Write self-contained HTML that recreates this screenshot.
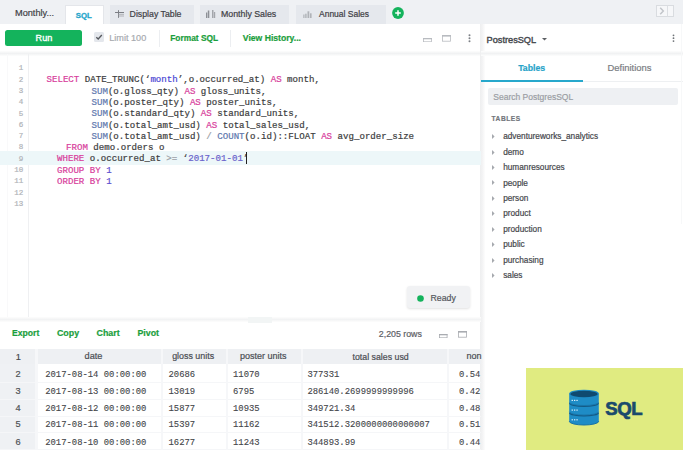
<!DOCTYPE html>
<html><head><meta charset="utf-8">
<style>
*{box-sizing:border-box;margin:0;padding:0}
html,body{width:683px;height:450px;overflow:hidden;background:#fff;font-family:"Liberation Sans",sans-serif;position:relative}
.a{position:absolute}
.t{white-space:pre;-webkit-text-stroke:0.2px currentColor}
.m{font-family:"Liberation Mono",monospace}
.code{}
</style></head><body>
<div class="a" style="left:0px;top:0px;width:683px;height:24px;background:#eff1f4;"></div>
<div class="a t  " style="left:15px;top:9.08px;font-size:9.2px;line-height:9.2px;color:#3f4146;">Monthly...</div>
<div class="a" style="left:64.5px;top:5px;width:39px;height:19px;background:#fff;border:1px solid #e4e6ea;border-bottom:none"></div>
<div class="a t " style="left:-16.299999999999997px;width:200px;text-align:center;top:12.27px;font-size:7.8px;line-height:7.8px;color:#25a6cb;font-weight:bold;-webkit-text-stroke:0.3px currentColor">SQL</div>
<div class="a" style="left:109.5px;top:4.5px;width:84px;height:19.5px;background:#e5e8ed;"></div>
<div class="a t  " style="left:129.6px;top:10.16px;font-size:8.75px;line-height:8.75px;color:#3f4146;">Display Table</div>
<div class="a" style="left:200px;top:4.5px;width:88.7px;height:19.5px;background:#e5e8ed;"></div>
<div class="a t  " style="left:221px;top:10.32px;font-size:8.8px;line-height:8.8px;color:#3f4146;">Monthly Sales</div>
<div class="a" style="left:296px;top:4.5px;width:89.8px;height:19.5px;background:#e5e8ed;"></div>
<div class="a t  " style="left:319px;top:10.28px;font-size:8.5px;line-height:8.5px;color:#3f4146;">Annual Sales</div>
<svg class="a" style="left:114px;top:9px" width="12" height="10" viewBox="0 0 12 10"><path d="M1 3.5H10" stroke="#7c7f85" stroke-width="1"/><path d="M4.5 1.2V8.8" stroke="#7c7f85" stroke-width="1"/><path d="M4.5 5.3H10M4.5 7H10" stroke="#a9acb1" stroke-width="0.9"/></svg>
<svg class="a" style="left:205px;top:10px" width="12" height="8" viewBox="0 0 12 8"><g fill="#8d9096"><rect x="1" y="2.5" width="1.3" height="5.5"/><rect x="2.8" y="0.5" width="1.5" height="7.5"/></g><g fill="#a3a6ab"><rect x="7" y="0" width="1.5" height="8"/><rect x="8.9" y="2" width="1.3" height="6"/></g></svg>
<svg class="a" style="left:302.5px;top:10.5px" width="9" height="7.5" viewBox="0 0 9 7.5"><g fill="#b0b3b8"><rect x="0.3" y="3.5" width="1.2" height="4"/><rect x="2.2" y="2.7" width="1.4" height="4.8"/><rect x="4.5" y="0.3" width="1.8" height="7.2"/><rect x="7" y="2.3" width="1.6" height="5.2"/></g></svg>
<svg class="a" style="left:391.8px;top:7.3px" width="12" height="12" viewBox="0 0 12 12"><circle cx="6" cy="6" r="5.9" fill="#14b35c"/><path d="M6 3.2V8.8M3.2 6H8.8" stroke="#fff" stroke-width="1.5"/></svg>
<svg class="a" style="left:656px;top:5px" width="18" height="12" viewBox="0 0 18 12"><rect x="0.5" y="0.5" width="17" height="11" fill="#f6f7f9" stroke="#d9dce0"/><path d="M11.5 0.5V11.5" stroke="#dcdfe3"/><path d="M4.2 2.8L7.3 6L4.2 9.2" fill="none" stroke="#c2c5ca" stroke-width="1.5"/></svg>
<div class="a" style="left:5px;top:29.6px;width:77.4px;height:16.9px;background:#14b35c;border-radius:2.5px"></div>
<div class="a t " style="left:-56.1px;width:200px;text-align:center;top:34.16px;font-size:9.1px;line-height:9.1px;color:#fff;-webkit-text-stroke:0.35px currentColor">Run</div>
<div class="a" style="left:94px;top:32.3px;width:10px;height:10px;background:#e4e7ec;border-radius:1.5px"></div>
<svg class="a" style="left:94px;top:32.3px" width="10" height="10" viewBox="0 0 10 10"><path d="M2.3 5.2L4.2 7L7.8 3" fill="none" stroke="#56595e" stroke-width="1.3"/></svg>
<div class="a t  " style="left:109.3px;top:33.66px;font-size:9.1px;line-height:9.1px;color:#a7aaaf;">Limit 100</div>
<div class="a" style="left:158.5px;top:29.7px;width:1px;height:17.5px;background:#eceef1;"></div>
<div class="a t  " style="left:170.2px;top:33.76px;font-size:8.4px;line-height:8.4px;color:#1a9e3c;font-weight:bold;">Format SQL</div>
<div class="a" style="left:230.3px;top:29.7px;width:1px;height:17.5px;background:#eceef1;"></div>
<div class="a t  " style="left:242.8px;top:34.25px;font-size:8.65px;line-height:8.65px;color:#1a9e3c;font-weight:bold;">View History...</div>
<svg class="a" style="left:423px;top:37.6px" width="9" height="4.2" viewBox="0 0 9 4.2"><rect x="0.4" y="0.4" width="8.2" height="3.4" fill="none" stroke="#b8bbc0" stroke-width="0.8"/><rect x="0" y="0" width="9" height="1.3" fill="#b8bbc0"/></svg>
<svg class="a" style="left:442.2px;top:35.2px" width="9" height="6.6" viewBox="0 0 9 6.6"><rect x="0.4" y="0.4" width="8.2" height="5.8" fill="none" stroke="#b8bbc0" stroke-width="0.8"/><rect x="0" y="0" width="9" height="1.6" fill="#b8bbc0"/></svg>
<svg class="a" style="left:468px;top:34px" width="3" height="9" viewBox="0 0 3 9"><g fill="#7d8086"><circle cx="1.5" cy="1.2" r="1"/><circle cx="1.5" cy="4.3" r="1"/><circle cx="1.5" cy="7.3" r="1"/></g></svg>
<div class="a" style="left:0px;top:51.3px;width:480.5px;height:5px;background:linear-gradient(#fdfdfd,#f1f2f3 50%,#fdfdfd);"></div>
<div class="a" style="left:479.8px;top:24px;width:5px;height:426px;background:linear-gradient(90deg,#eeeff0,#f2f2f3 40%,#fdfdfd);"></div>
<div class="a" style="left:6.5px;top:53.8px;width:1px;height:265px;background:#f9f9fa;"></div>
<div class="a" style="left:28px;top:53.8px;width:1px;height:265px;background:#eff0f2;"></div>
<div class="a" style="left:0px;top:151.4px;width:480.5px;height:14.1px;background:#edf7f9;"></div>
<div class="a t m" style="left:0;width:23.3px;text-align:right;top:65.42px;font-size:7.5px;line-height:7.5px;color:#b0b3b8">1</div>
<div class="a t m" style="left:0;width:23.3px;text-align:right;top:76.70px;font-size:7.5px;line-height:7.5px;color:#b0b3b8">2</div>
<div class="a t m code" style="left:46.5px;top:75.47px;font-size:9.12px;line-height:9.12px;color:#3c3d40;"><span style="color:#d8409c">SELECT</span> DATE_TRUNC(&#8216;<span style="color:#4b47d4">month</span>&#8217;,o.occurred_at) <span style="color:#d8409c">AS</span> month,</div>
<div class="a t m" style="left:0;width:23.3px;text-align:right;top:87.98px;font-size:7.5px;line-height:7.5px;color:#b0b3b8">3</div>
<div class="a t m code" style="left:91.5px;top:86.75px;font-size:9.12px;line-height:9.12px;color:#3c3d40;"><span style="color:#6078ae">SUM</span>(o.gloss_qty) <span style="color:#d8409c">AS</span> gloss_units,</div>
<div class="a t m" style="left:0;width:23.3px;text-align:right;top:99.26px;font-size:7.5px;line-height:7.5px;color:#b0b3b8">4</div>
<div class="a t m code" style="left:91.5px;top:98.03px;font-size:9.12px;line-height:9.12px;color:#3c3d40;"><span style="color:#6078ae">SUM</span>(o.poster_qty) <span style="color:#d8409c">AS</span> poster_units,</div>
<div class="a t m" style="left:0;width:23.3px;text-align:right;top:110.54px;font-size:7.5px;line-height:7.5px;color:#b0b3b8">5</div>
<div class="a t m code" style="left:91.5px;top:109.31px;font-size:9.12px;line-height:9.12px;color:#3c3d40;"><span style="color:#6078ae">SUM</span>(o.standard_qty) <span style="color:#d8409c">AS</span> standard_units,</div>
<div class="a t m" style="left:0;width:23.3px;text-align:right;top:121.82px;font-size:7.5px;line-height:7.5px;color:#b0b3b8">6</div>
<div class="a t m code" style="left:91.5px;top:120.59px;font-size:9.12px;line-height:9.12px;color:#3c3d40;"><span style="color:#6078ae">SUM</span>(o.total_amt_usd) <span style="color:#d8409c">AS</span> total_sales_usd,</div>
<div class="a t m" style="left:0;width:23.3px;text-align:right;top:133.10px;font-size:7.5px;line-height:7.5px;color:#b0b3b8">7</div>
<div class="a t m code" style="left:91.5px;top:131.87px;font-size:9.12px;line-height:9.12px;color:#3c3d40;"><span style="color:#6078ae">SUM</span>(o.total_amt_usd) <span style="color:#9a9ea6">/</span> <span style="color:#6078ae">COUNT</span>(o.id)::FLOAT <span style="color:#d8409c">AS</span> avg_order_size</div>
<div class="a t m" style="left:0;width:23.3px;text-align:right;top:144.38px;font-size:7.5px;line-height:7.5px;color:#b0b3b8">8</div>
<div class="a t m code" style="left:66px;top:143.15px;font-size:9.12px;line-height:9.12px;color:#3c3d40;"><span style="color:#d8409c">FROM</span> demo.orders o</div>
<div class="a t m" style="left:0;width:23.3px;text-align:right;top:155.66px;font-size:7.5px;line-height:7.5px;color:#b0b3b8">9</div>
<div class="a t m code" style="left:57px;top:154.43px;font-size:9.12px;line-height:9.12px;color:#3c3d40;"><span style="color:#d8409c">WHERE</span> o.occurred_at <span style="color:#9a9ea6">&gt;=</span> &#8216;<span style="color:#6a63cc">2017-01-01</span>&#8217;</div>
<div class="a t m" style="left:0;width:23.3px;text-align:right;top:166.94px;font-size:7.5px;line-height:7.5px;color:#b0b3b8">10</div>
<div class="a t m code" style="left:57px;top:165.71px;font-size:9.12px;line-height:9.12px;color:#3c3d40;"><span style="color:#d8409c">GROUP BY</span> <span style="color:#5b4fcf">1</span></div>
<div class="a t m" style="left:0;width:23.3px;text-align:right;top:178.22px;font-size:7.5px;line-height:7.5px;color:#b0b3b8">11</div>
<div class="a t m code" style="left:57px;top:176.99px;font-size:9.12px;line-height:9.12px;color:#3c3d40;"><span style="color:#d8409c">ORDER BY</span> <span style="color:#5b4fcf">1</span></div>
<div class="a t m" style="left:0;width:23.3px;text-align:right;top:189.50px;font-size:7.5px;line-height:7.5px;color:#b0b3b8">12</div>
<div class="a t m" style="left:0;width:23.3px;text-align:right;top:200.78px;font-size:7.5px;line-height:7.5px;color:#b0b3b8">13</div>
<div class="a" style="left:245.7px;top:151.8px;width:1.4px;height:11.9px;background:#222;"></div>
<div class="a" style="left:0px;top:316.5px;width:480.5px;height:5px;background:linear-gradient(#fdfdfd,#f2f3f4 50%,#fdfdfd);"></div>
<div class="a" style="left:248px;top:316.7px;width:24px;height:6.4px;background:#f2f5f5;"></div>
<div class="a" style="left:406.8px;top:285.8px;width:63px;height:22.5px;background:#f1f2f4;border-radius:3px;box-shadow:0 1px 2.5px rgba(0,0,0,.12)"></div>
<svg class="a" style="left:416.7px;top:295px" width="7" height="7" viewBox="0 0 7 7"><circle cx="3.5" cy="3.5" r="3.3" fill="#14b35c"/></svg>
<div class="a t  " style="left:430.5px;top:293.76px;font-size:8.75px;line-height:8.75px;color:#55585e;">Ready</div>
<div class="a t  " style="left:12.1px;top:329.19px;font-size:8.6px;line-height:8.6px;color:#1a9e3c;font-weight:bold;">Export</div>
<div class="a t  " style="left:56.9px;top:328.94px;font-size:8.9px;line-height:8.9px;color:#1a9e3c;font-weight:bold;">Copy</div>
<div class="a t  " style="left:96.5px;top:328.94px;font-size:8.9px;line-height:8.9px;color:#1a9e3c;font-weight:bold;">Chart</div>
<div class="a t  " style="left:137.5px;top:329.02px;font-size:8.8px;line-height:8.8px;color:#1a9e3c;font-weight:bold;">Pivot</div>
<div class="a t  " style="left:378.8px;top:330.12px;font-size:8.8px;line-height:8.8px;color:#5d6066;">2,205 rows</div>
<svg class="a" style="left:439.2px;top:333.6px" width="8.5" height="4.2" viewBox="0 0 8.5 4.2"><rect x="0.4" y="0.4" width="7.7" height="3.4" fill="none" stroke="#a9acb1" stroke-width="0.8"/><rect x="0" y="0" width="8.5" height="1.3" fill="#a9acb1"/></svg>
<svg class="a" style="left:458px;top:331.2px" width="9" height="6.6" viewBox="0 0 9 6.6"><rect x="0.4" y="0.4" width="8.2" height="5.8" fill="none" stroke="#a9acb1" stroke-width="0.8"/><rect x="0" y="0" width="9" height="1.6" fill="#a9acb1"/></svg>
<div class="a" style="left:0px;top:348.8px;width:480.5px;height:15.5px;background:#eef0f3;"></div>
<div class="a" style="left:0px;top:364.3px;width:35.3px;height:86px;background:#eff1f4;"></div>
<div class="a" style="left:0px;top:381.5px;width:480.5px;height:1px;background:#f5f6f8;"></div>
<div class="a" style="left:0px;top:398.8px;width:480.5px;height:1px;background:#f5f6f8;"></div>
<div class="a" style="left:0px;top:415.8px;width:480.5px;height:1px;background:#f5f6f8;"></div>
<div class="a" style="left:0px;top:432.3px;width:480.5px;height:1px;background:#f5f6f8;"></div>
<div class="a" style="left:0px;top:448.6px;width:480.5px;height:1px;background:#f5f6f8;"></div>
<div class="a" style="left:35.2px;top:348.8px;width:3px;height:102px;background:#f6f7f9;"></div>
<div class="a" style="left:161px;top:348.8px;width:2.2px;height:102px;background:#f6f7f9;"></div>
<div class="a" style="left:225.5px;top:348.8px;width:2.2px;height:102px;background:#f6f7f9;"></div>
<div class="a" style="left:300.8px;top:348.8px;width:2.2px;height:102px;background:#f6f7f9;"></div>
<div class="a" style="left:446.5px;top:348.8px;width:2.2px;height:102px;background:#f6f7f9;"></div>
<div class="a t  " style="left:15.8px;top:352.58px;font-size:9.2px;line-height:9.2px;color:#45484d;">1</div>
<div class="a t  " style="left:84.6px;top:352.18px;font-size:9.2px;line-height:9.2px;color:#4b4e53;">date</div>
<div class="a t  " style="left:172.2px;top:352.44px;font-size:8.9px;line-height:8.9px;color:#4b4e53;">gloss units</div>
<div class="a t  " style="left:240px;top:352.35px;font-size:9px;line-height:9px;color:#4b4e53;">poster units</div>
<div class="a t  " style="left:352.5px;top:352.52px;font-size:8.8px;line-height:8.8px;color:#4b4e53;">total sales usd</div>
<div class="a t  " style="left:466.5px;top:352.35px;font-size:9px;line-height:9px;color:#4b4e53;">non</div>
<div class="a t  " style="left:15.6px;top:369.98px;font-size:9.2px;line-height:9.2px;color:#505357;">2</div>
<div class="a t m " style="left:45.2px;top:371.04px;font-size:8.9px;line-height:8.9px;color:#44464a;-webkit-text-stroke:0.1px currentColor">2017-08-14 00:00:00</div>
<div class="a t m " style="left:168.5px;top:371.04px;font-size:8.9px;line-height:8.9px;color:#44464a;-webkit-text-stroke:0.1px currentColor">20686</div>
<div class="a t m " style="left:233px;top:371.04px;font-size:8.9px;line-height:8.9px;color:#44464a;-webkit-text-stroke:0.1px currentColor">11070</div>
<div class="a t m " style="left:307.4px;top:371.04px;font-size:8.9px;line-height:8.9px;color:#44464a;-webkit-text-stroke:0.1px currentColor">377331</div>
<div class="a t m " style="left:459px;top:371.04px;font-size:8.9px;line-height:8.9px;color:#44464a;-webkit-text-stroke:0.1px currentColor">0.54</div>
<div class="a t  " style="left:15.6px;top:386.78px;font-size:9.2px;line-height:9.2px;color:#505357;">3</div>
<div class="a t m " style="left:45.2px;top:387.84px;font-size:8.9px;line-height:8.9px;color:#44464a;-webkit-text-stroke:0.1px currentColor">2017-08-13 00:00:00</div>
<div class="a t m " style="left:168.5px;top:387.84px;font-size:8.9px;line-height:8.9px;color:#44464a;-webkit-text-stroke:0.1px currentColor">13019</div>
<div class="a t m " style="left:233px;top:387.84px;font-size:8.9px;line-height:8.9px;color:#44464a;-webkit-text-stroke:0.1px currentColor">6795</div>
<div class="a t m " style="left:307.4px;top:387.84px;font-size:8.9px;line-height:8.9px;color:#44464a;-webkit-text-stroke:0.1px currentColor">286140.2699999999996</div>
<div class="a t m " style="left:459px;top:387.84px;font-size:8.9px;line-height:8.9px;color:#44464a;-webkit-text-stroke:0.1px currentColor">0.42</div>
<div class="a t  " style="left:15.6px;top:403.58px;font-size:9.2px;line-height:9.2px;color:#505357;">4</div>
<div class="a t m " style="left:45.2px;top:404.64px;font-size:8.9px;line-height:8.9px;color:#44464a;-webkit-text-stroke:0.1px currentColor">2017-08-12 00:00:00</div>
<div class="a t m " style="left:168.5px;top:404.64px;font-size:8.9px;line-height:8.9px;color:#44464a;-webkit-text-stroke:0.1px currentColor">15877</div>
<div class="a t m " style="left:233px;top:404.64px;font-size:8.9px;line-height:8.9px;color:#44464a;-webkit-text-stroke:0.1px currentColor">10935</div>
<div class="a t m " style="left:307.4px;top:404.64px;font-size:8.9px;line-height:8.9px;color:#44464a;-webkit-text-stroke:0.1px currentColor">349721.34</div>
<div class="a t m " style="left:459px;top:404.64px;font-size:8.9px;line-height:8.9px;color:#44464a;-webkit-text-stroke:0.1px currentColor">0.48</div>
<div class="a t  " style="left:15.6px;top:420.28px;font-size:9.2px;line-height:9.2px;color:#505357;">5</div>
<div class="a t m " style="left:45.2px;top:421.34px;font-size:8.9px;line-height:8.9px;color:#44464a;-webkit-text-stroke:0.1px currentColor">2017-08-11 00:00:00</div>
<div class="a t m " style="left:168.5px;top:421.34px;font-size:8.9px;line-height:8.9px;color:#44464a;-webkit-text-stroke:0.1px currentColor">15397</div>
<div class="a t m " style="left:233px;top:421.34px;font-size:8.9px;line-height:8.9px;color:#44464a;-webkit-text-stroke:0.1px currentColor">11162</div>
<div class="a t m " style="left:307.4px;top:421.34px;font-size:8.9px;line-height:8.9px;color:#44464a;-webkit-text-stroke:0.1px currentColor">341512.3200000000000007</div>
<div class="a t m " style="left:459px;top:421.34px;font-size:8.9px;line-height:8.9px;color:#44464a;-webkit-text-stroke:0.1px currentColor">0.51</div>
<div class="a t  " style="left:15.6px;top:437.78px;font-size:9.2px;line-height:9.2px;color:#505357;">6</div>
<div class="a t m " style="left:45.2px;top:438.84px;font-size:8.9px;line-height:8.9px;color:#44464a;-webkit-text-stroke:0.1px currentColor">2017-08-10 00:00:00</div>
<div class="a t m " style="left:168.5px;top:438.84px;font-size:8.9px;line-height:8.9px;color:#44464a;-webkit-text-stroke:0.1px currentColor">16277</div>
<div class="a t m " style="left:233px;top:438.84px;font-size:8.9px;line-height:8.9px;color:#44464a;-webkit-text-stroke:0.1px currentColor">11243</div>
<div class="a t m " style="left:307.4px;top:438.84px;font-size:8.9px;line-height:8.9px;color:#44464a;-webkit-text-stroke:0.1px currentColor">344893.99</div>
<div class="a t m " style="left:459px;top:438.84px;font-size:8.9px;line-height:8.9px;color:#44464a;-webkit-text-stroke:0.1px currentColor">0.44</div>
<div class="a t  " style="left:486.6px;top:35.68px;font-size:9.2px;line-height:9.2px;color:#45484d;-webkit-text-stroke:0.4px currentColor">PostresSQL</div>
<svg class="a" style="left:541.5px;top:38.3px" width="5" height="3" viewBox="0 0 5 3"><path d="M0 0H5L2.5 2.6Z" fill="#5b5e63"/></svg>
<svg class="a" style="left:671.5px;top:34px" width="3" height="9" viewBox="0 0 3 9"><g fill="#6f7378"><circle cx="1.5" cy="1.3" r="0.9"/><circle cx="1.5" cy="4.2" r="0.9"/><circle cx="1.5" cy="7.1" r="0.9"/></g></svg>
<div class="a" style="left:481.3px;top:51px;width:201.7px;height:5px;background:linear-gradient(#fdfdfd,#f1f2f3 50%,#fdfdfd);"></div>
<div class="a t  " style="left:518.2px;top:63.70px;font-size:8.7px;line-height:8.7px;color:#27a3c9;font-weight:bold;">Tables</div>
<div class="a t  " style="left:607.6px;top:63.31px;font-size:9.4px;line-height:9.4px;color:#7a7d82;">Definitions</div>
<div class="a" style="left:481.3px;top:81px;width:201.7px;height:1px;background:#eef0f2;"></div>
<div class="a" style="left:481.3px;top:80px;width:101.5px;height:2px;background:#27a8cc;"></div>
<div class="a" style="left:488px;top:88.3px;width:190px;height:16.5px;background:#eef0f3;border-radius:2px"></div>
<div class="a t  " style="left:493.3px;top:92.98px;font-size:8.5px;line-height:8.5px;color:#9b9ea4;">Search PostgresSQL</div>
<div class="a t  " style="left:491.5px;top:115.99px;font-size:6.6px;line-height:6.6px;color:#73767c;font-weight:bold;letter-spacing:0.55px">TABLES</div>
<svg class="a" style="left:491.8px;top:134.20px" width="3" height="5" viewBox="0 0 3 5"><path d="M0 0L2.6 2.5L0 5Z" fill="#a6a9ae"/></svg>
<div class="a t  " style="left:503.2px;top:133.29px;font-size:8.25px;line-height:8.25px;color:#46484d;">adventureworks_analytics</div>
<svg class="a" style="left:491.8px;top:149.62px" width="3" height="5" viewBox="0 0 3 5"><path d="M0 0L2.6 2.5L0 5Z" fill="#a6a9ae"/></svg>
<div class="a t  " style="left:503.2px;top:148.71px;font-size:8.25px;line-height:8.25px;color:#46484d;">demo</div>
<svg class="a" style="left:491.8px;top:165.04px" width="3" height="5" viewBox="0 0 3 5"><path d="M0 0L2.6 2.5L0 5Z" fill="#a6a9ae"/></svg>
<div class="a t  " style="left:503.2px;top:164.13px;font-size:8.25px;line-height:8.25px;color:#46484d;">humanresources</div>
<svg class="a" style="left:491.8px;top:180.46px" width="3" height="5" viewBox="0 0 3 5"><path d="M0 0L2.6 2.5L0 5Z" fill="#a6a9ae"/></svg>
<div class="a t  " style="left:503.2px;top:179.55px;font-size:8.25px;line-height:8.25px;color:#46484d;">people</div>
<svg class="a" style="left:491.8px;top:195.88px" width="3" height="5" viewBox="0 0 3 5"><path d="M0 0L2.6 2.5L0 5Z" fill="#a6a9ae"/></svg>
<div class="a t  " style="left:503.2px;top:194.97px;font-size:8.25px;line-height:8.25px;color:#46484d;">person</div>
<svg class="a" style="left:491.8px;top:211.30px" width="3" height="5" viewBox="0 0 3 5"><path d="M0 0L2.6 2.5L0 5Z" fill="#a6a9ae"/></svg>
<div class="a t  " style="left:503.2px;top:210.39px;font-size:8.25px;line-height:8.25px;color:#46484d;">product</div>
<svg class="a" style="left:491.8px;top:226.72px" width="3" height="5" viewBox="0 0 3 5"><path d="M0 0L2.6 2.5L0 5Z" fill="#a6a9ae"/></svg>
<div class="a t  " style="left:503.2px;top:225.81px;font-size:8.25px;line-height:8.25px;color:#46484d;">production</div>
<svg class="a" style="left:491.8px;top:242.14px" width="3" height="5" viewBox="0 0 3 5"><path d="M0 0L2.6 2.5L0 5Z" fill="#a6a9ae"/></svg>
<div class="a t  " style="left:503.2px;top:241.23px;font-size:8.25px;line-height:8.25px;color:#46484d;">public</div>
<svg class="a" style="left:491.8px;top:257.56px" width="3" height="5" viewBox="0 0 3 5"><path d="M0 0L2.6 2.5L0 5Z" fill="#a6a9ae"/></svg>
<div class="a t  " style="left:503.2px;top:256.65px;font-size:8.25px;line-height:8.25px;color:#46484d;">purchasing</div>
<svg class="a" style="left:491.8px;top:272.98px" width="3" height="5" viewBox="0 0 3 5"><path d="M0 0L2.6 2.5L0 5Z" fill="#a6a9ae"/></svg>
<div class="a t  " style="left:503.2px;top:272.07px;font-size:8.25px;line-height:8.25px;color:#46484d;">sales</div>
<div class="a" style="left:681px;top:24px;width:1px;height:200px;background:#f7f8f9;"></div>
<div class="a" style="left:526px;top:368.4px;width:157px;height:82px;background:#e0eb81;"></div>
<svg class="a" style="left:562px;top:384px" width="44" height="46" viewBox="0 0 44 46">
 <path d="M7.2 28.5V37.2A14.8 3.8 0 0 0 36.8 37.2V28.5Z" fill="#1e8cc6"/>
 <path d="M7.2 37.2A14.8 3.8 0 0 0 36.8 37.2" fill="none" stroke="#1872a6" stroke-width="1"/>
 <ellipse cx="22" cy="29.2" rx="14.8" ry="3.4" fill="#145a85"/>
 <path d="M7.2 19V27.8A14.8 3.4 0 0 0 36.8 27.8V19Z" fill="#1e8cc6"/>
 <path d="M7.5 27.8A14.5 3.2 0 0 0 36.5 27.8" fill="none" stroke="#1872a6" stroke-width="0.8"/>
 <ellipse cx="22" cy="19.6" rx="14.8" ry="3.4" fill="#145a85"/>
 <path d="M7.2 9.6V18.3A14.8 3.4 0 0 0 36.8 18.3V9.6Z" fill="#1e8cc6"/>
 <path d="M7.5 18.3A14.5 3.2 0 0 0 36.5 18.3" fill="none" stroke="#1872a6" stroke-width="0.8"/>
 <ellipse cx="22" cy="9.6" rx="14.8" ry="3.9" fill="#1e8cc6"/>
 <ellipse cx="22" cy="10" rx="13.6" ry="3.2" fill="#0f4a70"/>
 <g fill="#dff0fa"><rect x="9.6" y="15.8" width="1.3" height="1.2"/><rect x="12" y="15.8" width="1.3" height="1.2"/><rect x="14.4" y="15.8" width="1.3" height="1.2"/>
 <rect x="9.6" y="25.5" width="1.3" height="1.2"/><rect x="12" y="25.5" width="1.3" height="1.2"/><rect x="14.4" y="25.5" width="1.3" height="1.2"/>
 <rect x="9.6" y="35.2" width="1.3" height="1.2"/><rect x="12" y="35.2" width="1.3" height="1.2"/><rect x="14.4" y="35.2" width="1.3" height="1.2"/></g>
</svg>
<div class="a t  " style="left:605.3px;top:400.39px;font-size:18.6px;line-height:18.6px;color:#1b4a6c;font-weight:bold;-webkit-text-stroke:0.7px currentColor;letter-spacing:-0.4px">SQL</div>
</body></html>
